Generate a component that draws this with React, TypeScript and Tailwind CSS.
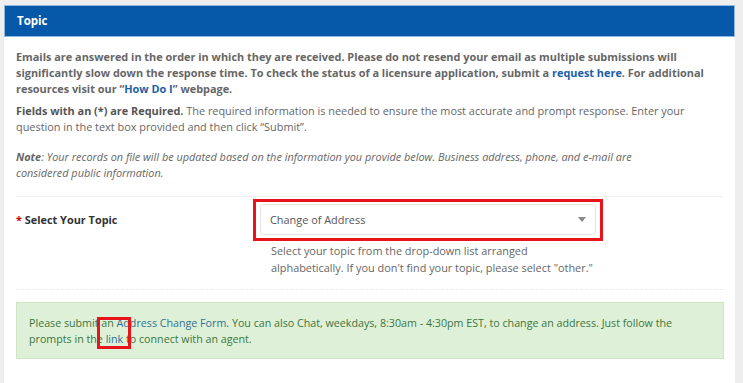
import React from "react";

const font = { fontFamily: '"Open Sans", "Liberation Sans", sans-serif' };

export default function App() {
  return (
    <div className="min-h-[383px] w-[743px] bg-[#eeeeee] pt-[5px] pl-[4px]" style={font}>
      <div className="w-[731px] min-h-[378px] bg-white">
        <div className="h-[32px] bg-[#0659a8] border border-[#8fb8e0] flex items-center px-3 text-[11.5px] font-bold text-white">
          Topic
        </div>

        <div className="px-3 pt-3 text-[10.9px] leading-[16px] text-[#666]">
          <p className="max-w-[692px] font-bold text-[#666]">
            Emails are answered in the order in which they are received. Please do not resend your email as multiple
            submissions will significantly slow down the response time. To check the status of a licensure application,
            submit a{" "}
            <a href="#" className="text-[#1a5fa8]">
              request here
            </a>
            . For additional resources visit our “
            <a href="#" className="text-[#1a5fa8]">
              How Do I
            </a>
            ” webpage.
          </p>

          <p className="max-w-[692px] mt-[6px]">
            <span className="font-bold text-[#555]">Fields with an (*) are Required.</span> The required information is
            needed to ensure the most accurate and prompt response. Enter your question in the text box provided and
            then click “Submit”.
          </p>

          <p className="max-w-[660px] mt-[14px] italic">
            <span className="font-bold">Note</span>: Your records on file will be updated based on the information you
            provide below. Business address, phone, and e-mail are considered public information.
          </p>

          <div className="mt-[15px] border-t border-[#f0f0f0] flex pt-[2px]">
            <div className="w-[237px] pt-[13px] font-bold text-[#333]">
              <span className="text-[#c00]">*</span> Select Your Topic
            </div>
            <div className="w-[350px]">
              <div className="border-[3px] border-[#e8141c] px-[4px] pt-[2px] pb-[3px]">
                <div className="h-[31px] border border-[#e6e6e6] rounded-[3px] flex items-center justify-between pl-[9px] pr-[9px] text-[#555]">
                  <span>Change of Address</span>
                  <svg width="8" height="5" viewBox="0 0 8 5">
                    <path d="M0 0h8L4 5z" fill="#888" />
                  </svg>
                </div>
              </div>
              <p className="pl-[18px] pt-[1px] leading-[17px] text-[#666]">
                Select your topic from the drop-down list arranged alphabetically. If you don't find your topic, please
                select "other."
              </p>
            </div>
          </div>

          <div className="mt-[13px] border-t border-dashed border-[#ececec]" />

          <div className="mt-[12px] w-[708px] border border-[#cfe6c2] bg-[#dff0d8] pl-3 pr-[14px] pt-[12px] pb-[11px] text-[10.7px] text-[#3c763d]">
            Please submit an{" "}
            <a href="#" className="text-[#31708f]">
              Address Change Form
            </a>
            . You can also Chat, weekdays, 8:30am - 4:30pm EST, to change an address. Just follow the prompts in the{" "}
            <span className="relative">
              <a href="#" className="text-[#31708f]">
                link
              </a>
              <span className="absolute left-[-9px] right-[-8px] top-[-15px] h-[32px] border-[3px] border-[#e8141c]" />
            </span>{" "}
            to connect with an agent.
          </div>
        </div>
      </div>
    </div>
  );
}
